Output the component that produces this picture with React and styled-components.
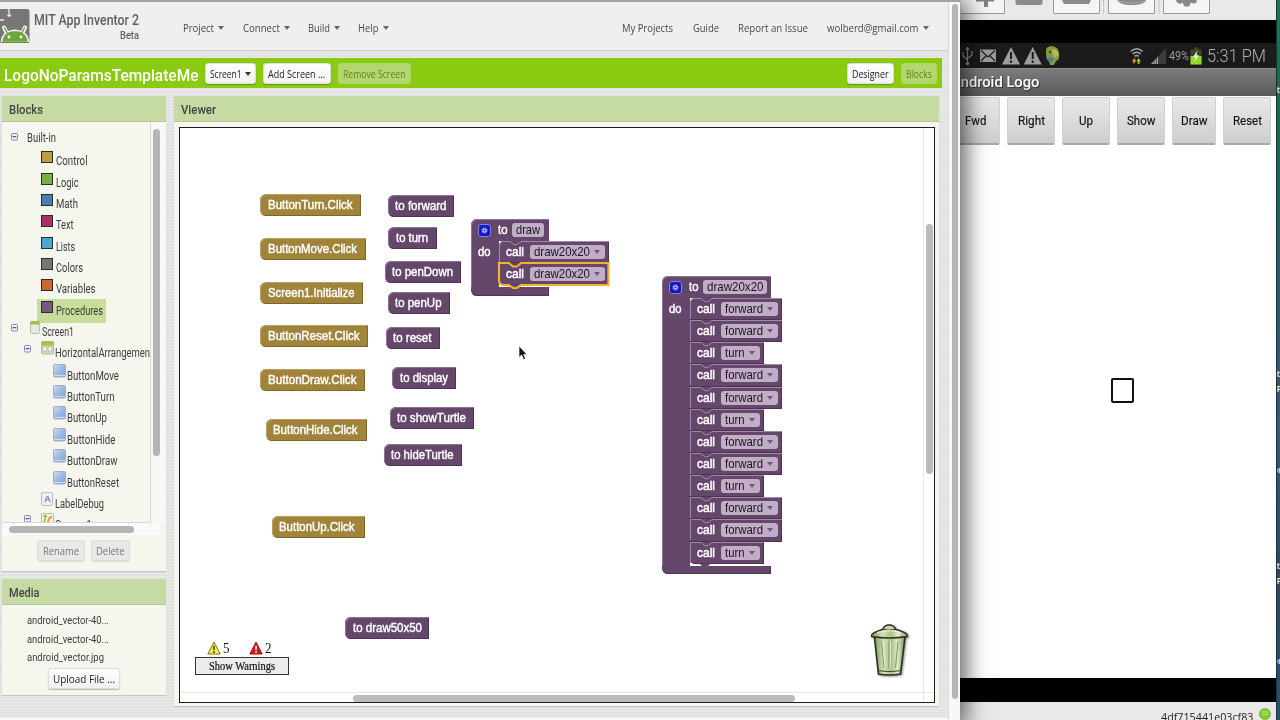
import React, { useLayoutEffect, useRef, useState } from 'react';
import styled, { createGlobalStyle, css } from 'styled-components';

const GlobalStyle = createGlobalStyle`
  * { box-sizing: border-box; }
  body { margin: 0; overflow: hidden; background: #2d4f66; }
  svg { flex: none; }
`;

const ui = '"Open Sans", "Noto Sans", sans-serif';
const roboto = 'Roboto, sans-serif';
const arial = '"Liberation Sans", Arial, sans-serif';

/* ---------- text that is condensed or widened to a given width ---------- */

const FitBox = styled.span`
  display: inline-block;
  flex: none;
  width: ${(p) => p.$w}px;
  white-space: nowrap;
`;
const FitInner = styled.span`
  display: inline-block;
  transform-origin: 0 50%;
`;

function Fit({ w, children }) {
  const ref = useRef(null);
  const [scale, setScale] = useState(1);
  useLayoutEffect(() => {
    const measure = () => {
      if (ref.current && ref.current.offsetWidth) {
        const range = document.createRange();
        range.selectNodeContents(ref.current);
        ref.current.style.transform = 'none';
        const natural = range.getBoundingClientRect().width;
        ref.current.style.transform = `scaleX(${w / natural})`;
        setScale(w / natural);
      }
    };
    measure();
    document.fonts.ready.then(measure);
  }, [w, children]);
  return (
    <FitBox $w={w}>
      <FitInner ref={ref} style={{ transform: `scaleX(${scale})` }}>{children}</FitInner>
    </FitBox>
  );
}

/* ---------- shell ---------- */

const Desktop = styled.div`
  display: flex;
  width: 1280px;
  height: 720px;
  overflow: hidden;
`;
const Browser = styled.div`
  display: flex;
  flex: none;
  width: 960px;
  height: 720px;
  border-top: 2px solid #a2a2a2;
  background: #fafafa;
  position: relative;
  z-index: 2;
  box-shadow: 2px 4px 22px 4px rgba(0, 0, 0, 0.62);
`;
const Page = styled.div`
  flex: none;
  width: 948px;
  height: 716px;
  display: flex;
  flex-direction: column;
  background:
    repeating-linear-gradient(0deg, rgba(255, 255, 255, 0.25) 0 1px, transparent 1px 3px),
    repeating-linear-gradient(90deg, rgba(0, 0, 0, 0.018) 0 1px, transparent 1px 4px),
    #e3e3e3;
`;
const PageScroll = styled.div`
  flex: 1;
  padding: 2px 0 0 2.5px;
  border-left: 1px solid #d8d8d8;
  background: #f8f8f8;
`;
const Thumb = styled.div`
  width: ${(p) => p.$w}px;
  height: ${(p) => p.$h}px;
  border-radius: 4px;
  background: ${(p) => p.$c || '#b5b5b5'};
`;

/* ---------- top bar ---------- */

const TopBar = styled.header`
  display: flex;
  align-items: flex-start;
  height: 49px;
  flex: none;
  background: #efefef;
  border-bottom: 1px solid #cbcbcb;
`;
const Brand = styled.div`
  width: 105px;
  margin-left: 5px;
  padding-top: 10px;
  display: flex;
  flex-direction: column;
  align-items: flex-end;
  font: 500 14px/16px ${roboto};
  color: #5f5f5f;
`;
const Beta = styled.div`
  font: 500 10.5px/14px ${roboto};
  margin-top: 1px;
`;
const Nav = styled.nav`
  display: flex;
  padding-top: 18px;
  margin-left: ${(p) => p.$ml || 0}px;
  gap: ${(p) => p.$gap}px;
  font: 11px/16px ${ui};
  color: #484848;
`;
const NavItem = styled.span`
  display: flex;
  align-items: center;
  gap: 4px;
`;
const Caret = styled.i`
  width: 0;
  height: 0;
  border: 3px solid transparent;
  border-top: 4px solid ${(p) => p.$c || '#666'};
  border-bottom: 0;
`;

const Green = styled.div`
  display: flex;
  align-items: center;
  height: 30px;
  width: 942px;
  flex: none;
  margin-top: 7px;
  padding-left: 4px;
  padding-right: 5px;
  background: #8aca10;
  color: #fff;
`;
const ProjectName = styled.h1`
  margin: 5px 6px 0 0;
  font: 500 16px/20px ${roboto};
`;
const Button = styled.button`
  flex: none;
  display: flex;
  align-items: center;
  justify-content: center;
  gap: 3px;
  width: ${(p) => p.$w}px;
  height: 21px;
  margin: 1px ${(p) => p.$mr || 0}px 0 0;
  padding: 0;
  border: 1px solid #ddd;
  border-radius: 3px;
  background: linear-gradient(#fff, #f1f1f1);
  box-shadow: 0 1px 1px rgba(0, 0, 0, 0.25);
  font: 11px/16px ${ui};
  color: #222;
  ${(p) => p.$on && css`
    background: #b3d76e;
    border-color: #b0d763;
    box-shadow: none;
    color: #5d7f2a;
  `}
  ${(p) => p.$off && css`
    background: #e8e9e6;
    border-color: #dcdddb;
    box-shadow: 0 1px 1px rgba(0, 0, 0, 0.1);
    color: #777;
  `}
`;
const Spacer = styled.div`flex: 1;`;

/* ---------- panels ---------- */

const Columns = styled.main`
  display: flex;
  gap: 8px;
  padding: 8px 0 0 2px;
`;
const Side = styled.div`
  width: 164px;
  display: flex;
  flex-direction: column;
  gap: 8px;
`;
const Panel = styled.section`
  height: ${(p) => p.$h}px;
  width: ${(p) => p.$w}px;
  display: flex;
  flex-direction: column;
  background: #f5f6ee;
  box-shadow: 0 1px 1px rgba(0, 0, 0, 0.12);
`;
const PanelTitle = styled.h2`
  flex: none;
  height: 26px;
  margin: 0;
  padding: 6px 0 0 7px;
  background: #c6daa3;
  border-bottom: 1px solid #b4c596;
  font: 500 12px/17px ${roboto};
  color: #444;
`;
const TreeFrame = styled.div`
  display: flex;
  height: 401px;
  flex: none;
`;
const Tree = styled.div`
  width: 149px;
  overflow: hidden;
  padding-top: 4px;
  border-right: 1px solid #d9dad4;
  border-bottom: 1px solid #d9dad4;
  font: 12px/16px ${roboto};
  color: #3c3c3c;
`;
const Row = styled.div`
  display: flex;
  align-items: flex-start;
  height: ${(p) => p.$h || 21.35}px;
  padding-left: ${(p) => p.$pl}px;
  gap: ${(p) => p.$gap ?? 2}px;
`;
const RowText = styled.span`padding-top: 4px;`;
const Mark = styled.span`
  display: flex;
  width: 69px;
  height: 24px;
  margin: 0 0 -3px -4.5px;
  padding-left: 4.5px;
  gap: 2.3px;
  background: ${(p) => (p.$on ? '#c9dd9b' : 'transparent')};
`;
const Swatch = styled.i`
  flex: none;
  width: 12px;
  height: 12px;
  margin-top: 2px;
  border: 1px solid #2c2c2c;
  background: ${(p) => p.$c};
`;
const TreeScroll = styled.div`
  flex: 1;
  padding: 7px 0 0 2px;
  background: #f8f8f6;
`;
const BottomScroll = styled.div`
  flex: none;
  height: 12px;
  width: 158px;
  padding: 3px 0 0 7px;
  background: #fafafa;
`;
const ButtonRow = styled.div`
  display: flex;
  gap: 6.5px;
  padding: 4px 0 0 35px;
`;
const MediaList = styled.div`
  padding: 6px 0 0 25px;
  font: 11.5px/18.6px ${roboto};
  color: #3c3c3c;
`;
const MediaItem = styled.div`height: 18.6px;`;
const UploadRow = styled.div`padding: 0.5px 0 0 45.5px;`;

/* ---------- blocks workspace ---------- */

const Canvas = styled.div`
  position: relative;
  width: 756px;
  height: 576px;
  margin: 5px 0 0 5px;
  border: 1px solid #1e1e1e;
  background: #fff;
  overflow: hidden;
`;
const at = css`
  position: absolute;
  left: ${(p) => p.$x - 180}px;
  top: ${(p) => p.$y - 128}px;
`;
const bevel = (c) => css`
  box-shadow: inset 1px 1px 0 ${c[1]}, inset -1px -1px 0 ${c[2]};
  background: ${c[0]};
`;
const GOLD = ['#a1843a', '#b8a066', '#7d662a'];
const PURPLE = ['#65476c', '#8b7391', '#4c3352'];

const Solo = styled.div`
  ${at}
  ${(p) => bevel(p.$c)}
  display: flex;
  align-items: center;
  width: ${(p) => p.$w}px;
  height: 22px;
  padding: 0 0 0 7.4px;
  border-radius: 6px 0 0 6px;
  font: 13px/20px ${arial};
  color: #fff;
  -webkit-text-stroke: 0.45px #fff;
`;
const Proc = styled.div`
  ${at}
  width: ${(p) => p.$w}px;
  font: 13px/20px ${arial};
  color: #fff;
`;
const ProcHead = styled.div`
  display: flex;
  align-items: center;
  height: 22px;
  padding-left: 7px;
  border-radius: 6px 0 0 0;
  background: ${PURPLE[0]};
  box-shadow: inset 1px 1px 0 ${PURPLE[1]};
`;
const ProcBody = styled.div`
  display: flex;
  width: max-content;
`;
const Rail = styled.div`
  width: 28px;
  padding: 1px 0 0 7px;
  background: ${PURPLE[0]};
  box-shadow: inset 1px 0 0 ${PURPLE[1]};
`;
const Stack = styled.div`
  display: flex;
  flex-direction: column;
  align-items: flex-start;
  padding-bottom: 2px;
  background: linear-gradient(#fff, #fff) 0 100% / ${(p) => p.$w - 28}px 2px no-repeat;
`;
const ProcFoot = styled.div`
  height: ${(p) => p.$h}px;
  border-radius: 0 0 0 6px;
  background: ${PURPLE[0]};
  box-shadow: inset 0 -1px 0 ${PURPLE[2]}, inset -1px 0 0 ${PURPLE[2]};
`;
const Word = styled.span`
  -webkit-text-stroke: 0.5px #fff;
  margin-left: ${(p) => p.$ml || 0}px;
`;
const Field = styled.span`
  display: flex;
  align-items: center;
  gap: 4px;
  height: 14px;
  width: ${(p) => p.$w}px;
  margin-left: ${(p) => p.$ml || 0}px;
  padding-left: 4px;
  border-radius: 3px;
  background: #c1adc6;
  color: #1c1420;
`;
const CallBox = styled.div`
  position: relative;
  display: flex;
  align-items: center;
  width: ${(p) => p.$w}px;
  height: 22.15px;
  padding-left: 7px;
  background: ${PURPLE[0]};
  box-shadow: inset -1px -1px 0 ${PURPLE[2]};
  border-radius: ${(p) => (p.$first ? '5px' : 0)} 0 0 ${(p) => (p.$last ? '5px' : 0)};
`;
const Edge = styled.svg`
  position: absolute;
  left: 0;
  top: 0;
  overflow: visible;
  pointer-events: none;
  z-index: ${(p) => (p.$z ? 2 : 1)};
`;

function Gear() {
  return (
    <svg width="13" height="13" viewBox="0 0 13 13">
      <rect x="0.5" y="0.5" width="12" height="12" rx="2.5" fill="#1717c4" stroke="#7f86d6" />
      <circle cx="6.5" cy="6.5" r="1.7" fill="#1717c4" stroke="#dfe2ff" strokeWidth="1.2" />
      <circle cx="6.5" cy="6.5" r="2.8" fill="none" stroke="#9aa2ee" strokeWidth="0.8" strokeDasharray="1.1 1.1" />
    </svg>
  );
}

function Call({ name, tw, w, first, last, selected }) {
  return (
    <CallBox $w={w} $first={first} $last={last}>
      <Edge width={w} height="22" $z={selected}>
        {last && <path d="M9 21.5 L13.5 25.3 H16.5 L21 21.5 Z" fill={PURPLE[0]} />}
        {selected ? (
          <path
            d={`M0 0 H10 L14 3.5 H18 L22 0 H${w} V22 H22 L18 25 H14 L10 22 H5 Q0 22 0 17 Z`}
            fill="none" stroke="#f3b228" strokeWidth="2.2"
          />
        ) : (
          <path
            d={`M0.5 21 V${first ? 5 : 0.5} ${first ? 'Q0.5 0.5 5 0.5' : ''} H11 L15 3.7 H18 L22 0.5 H${w}`}
            fill="none" stroke="#a08ba6" strokeWidth="1"
          />
        )}
      </Edge>
      <Word><Fit w={18}>call</Fit></Word>
      <Field $ml={6} $w={tw + 19}>
        <Fit w={tw}>{name}</Fit>
        <Caret $c="#6d5b78" />
      </Field>
    </CallBox>
  );
}

function Procedure({ x, y, w, name, nameW, calls, foot }) {
  return (
    <Proc $x={x} $y={y} $w={w}>
      <ProcHead>
        <Gear />
        <Word $ml={7}><Fit w={9.5}>to</Fit></Word>
        <Field $ml={4} $w={nameW + 8}><Fit w={nameW}>{name}</Fit></Field>
      </ProcHead>
      <ProcBody>
        <Rail><Word><Fit w={12.5}>do</Fit></Word></Rail>
        <Stack $w={w}>
          {calls.map((c, i) => (
            <Call key={i} {...c} first={i === 0} last={i === calls.length - 1} />
          ))}
        </Stack>
      </ProcBody>
      <ProcFoot $h={foot} />
    </Proc>
  );
}

const ViewScrollV = styled.div`
  position: absolute;
  top: 0;
  right: 0;
  width: 11.5px;
  height: 100%;
  padding: 96px 0 0 2.5px;
  border-left: 1px solid #e6e6e6;
`;
const ViewScrollH = styled.div`
  position: absolute;
  left: 0;
  bottom: 0;
  width: 100%;
  height: 10px;
  padding: 1.5px 0 0 172.5px;
  border-top: 1px solid #e6e6e6;
`;
const Warnings = styled.div`
  ${at}
  width: 94px;
  font: 14.5px/16px "Liberation Serif", serif;
  color: #111;
`;
const WarnCounts = styled.div`
  display: flex;
  align-items: center;
  gap: 2px;
  padding-left: 11.5px;
  height: 18px;
`;
const WarnButton = styled.div`
  display: flex;
  justify-content: center;
  align-items: center;
  height: 18px;
  border: 1px solid #333;
  background: #ececec;
  font-size: 12px;
  -webkit-text-stroke: 0.2px #111;
`;
const Float = styled.div`${at} line-height: 0;`;
const Gap = styled.span`
  flex: none;
  width: ${(p) => p.$w}px;
`;

function Warn({ fill, line, mark }) {
  return (
    <svg width="14" height="14" viewBox="0 0 14 14">
      <path d="M7 1 L13.2 13 H0.8 Z" fill={fill} stroke={line} strokeLinejoin="round" />
      <path d="M7 4.7 V9" stroke={mark} strokeWidth="1.5" />
      <circle cx="7" cy="11" r="0.9" fill={mark} />
    </svg>
  );
}

function Trash() {
  return (
    <svg width="42" height="58" viewBox="0 0 42 58">
      <defs>
        <linearGradient id="can" x1="0" x2="1">
          <stop offset="0" stopColor="#7f9a5c" />
          <stop offset="0.3" stopColor="#d3e0b7" />
          <stop offset="0.55" stopColor="#a9c186" />
          <stop offset="0.75" stopColor="#e0ebcb" />
          <stop offset="1" stopColor="#7c9658" />
        </linearGradient>
      </defs>
      <g style={{ filter: 'drop-shadow(1px 1px 1.2px rgba(0,0,0,.45))' }}>
        <path d="M5.5 16 L9.5 53 Q20 55 31.5 53 L36 16 Z" fill="url(#can)" stroke="#2b3420" strokeWidth="1.7" />
        <path d="M2.5 15.5 Q2 12.5 8 10.5 Q14 7.5 20 7.5 Q27 7.5 33 10.5 Q39 12.5 38.5 15.5 Q20 18.5 2.5 15.5 Z" fill="url(#can)" stroke="#2b3420" strokeWidth="1.4" />
        <path d="M14 8 Q15.5 4 20 4 Q25 4 26.5 8" fill="#c8d8aa" stroke="#2b3420" strokeWidth="1.6" />
        <path d="M8 11.5 Q20 8 32 11.5" fill="none" stroke="#edf4dd" strokeWidth="1.1" />
        <path d="M9.5 49.5 Q20 51.5 32 49.5" fill="none" stroke="#3b492b" strokeWidth="1.2" />
        <path d="M12.5 20 L15 47 M20 20 V48 M29 20 L26.5 47" stroke="#7d9560" strokeWidth="1" />
        <path d="M21.3 20 V48 M13.8 20 L16.2 47" stroke="#eef4e0" strokeWidth="0.8" />
      </g>
    </svg>
  );
}

/* ---------- small drawings ---------- */

function Logo() {
  return (
    <svg width="30" height="37" viewBox="0 0 30 37">
      <path d="M0 2 H27 Q29.5 2 29.5 4.5 V33 Q29.5 36 27 36 H0 Z" fill="#777" />
      <path d="M9 1.5 V9 M7.5 8 Q9 10 11 8 M0 13 H4" stroke="#ececec" strokeWidth="1.3" fill="none" />
      <path d="M6.5 25.5 L4 20.5 M22.5 25.5 L25 20.5" stroke="#f4f4f4" strokeWidth="4" strokeLinecap="round" />
      <path d="M1.5 35.5 Q2 24 14.8 23.2 Q28 24 28.3 35.5 Z" fill="#6ea53a" stroke="#f4f4f4" strokeWidth="1.6" />
      <path d="M7.2 26 L4.5 21 M21.8 26 L24.5 21" stroke="#6ea53a" strokeWidth="1.5" strokeLinecap="round" />
      <circle cx="9" cy="30" r="1.4" fill="#fff" /><circle cx="21" cy="30" r="1.4" fill="#fff" />
      <path d="M1 35.5 H29" stroke="#5e8735" />
    </svg>
  );
}
const Toggle = ({ mt = 2 }) => (
  <svg width="7" height="8" viewBox="0 0 7 8" style={{ marginTop: mt }}>
    <rect x="0.5" y="0.5" width="6" height="6.5" rx="1.2" fill="#f4f5fb" stroke="#8286b4" />
    <path d="M1.7 3.7 H5.3" stroke="#33387c" strokeWidth="1.1" />
  </svg>
);
const ScreenIcon = () => (
  <svg width="10" height="15" viewBox="0 0 10 15">
    <rect x="0.5" y="1.5" width="9" height="12" rx="1" fill="#e6eadf" stroke="#b9c0b0" />
    <path d="M0.5 4.5 V2 Q0.5 1 1.5 1 H8.5 Q9.5 1 9.5 2 V4.5 Z" fill="#9fbf4d" />
  </svg>
);
const ArrangeIcon = () => (
  <svg width="13" height="14" viewBox="0 0 13 14">
    <rect x="0.5" y="0.5" width="12" height="12.5" rx="1" fill="#cfdaba" stroke="#b3c08e" />
    <path d="M0.5 4.5 V0.5 H12.5 V4.5 Z" fill="#9cc541" />
    <rect x="2" y="6" width="3.6" height="4" fill="#fff" stroke="#a0b08a" strokeWidth=".6" />
    <rect x="7.2" y="6" width="3.6" height="4" fill="#fff" stroke="#a0b08a" strokeWidth=".6" />
  </svg>
);
const ButtonIcon = () => (
  <svg width="13" height="14" viewBox="0 0 13 14">
    <defs>
      <linearGradient id="bi" x1="0" y1="0" x2="1" y2="1">
        <stop offset="0" stopColor="#d3e0f3" /><stop offset="0.5" stopColor="#9cb9e2" /><stop offset="1" stopColor="#86a7da" />
      </linearGradient>
    </defs>
    <rect x="0.5" y="0.5" width="12" height="12.5" rx="1.5" fill="url(#bi)" stroke="#a3aebf" />
    <path d="M1 11.5 H12" stroke="#cfdcf0" />
  </svg>
);
const LabelBox = styled.span`
  width: 12px;
  height: 14px;
  border: 1px solid #b9bfca;
  border-radius: 2px;
  background: #eef0f5;
  font: 700 9.5px/12px ${arial};
  text-align: center;
  color: #7988b8;
`;
const SensorIcon = () => (
  <svg width="13" height="14" viewBox="0 0 13 14">
    <rect x="0.5" y="0.5" width="12" height="13" rx="1" fill="#f6f5e4" stroke="#b8b8b0" />
    <path d="M2 3 H6 M5 2 L3 10" stroke="#8fbf3a" strokeWidth="1.6" />
    <path d="M7 11 Q7 4 11 4" stroke="#e59a3a" strokeWidth="2" fill="none" />
  </svg>
);

/* ---------- phone window ---------- */

const Phone = styled.div`
  flex: none;
  width: 315.5px;
  height: 720px;
  display: flex;
  flex-direction: column;
  background: #fff;
`;
const Tools = styled.div`
  display: flex;
  height: 20px;
  background: #e9e9e9;
  line-height: 0;
`;
const Black = styled.div`height: ${(p) => p.$h}px; background: #000; flex: none;`;
const Status = styled.div`
  display: flex;
  align-items: center;
  height: 25px;
  flex: none;
  background: #1b1b1b;
  color: #9a9a9a;
  font: 12px/24px ${roboto};
`;
const Title = styled.div`
  height: 28px;
  flex: none;
  border-top: 1px solid #8a8a8a;
  background: linear-gradient(#7c7c7c, #5a5a5a);
  font: 500 14.5px/28px ${roboto};
  color: #fff;
  text-shadow: 1px 1px 1px rgba(0, 0, 0, 0.5);
`;
const TitleText = styled.div`margin-left: -9px;`;
const Keys = styled.div`
  display: flex;
  padding-top: 1px;
  height: 582px;
`;
const Key = styled.div`
  display: flex;
  justify-content: center;
  align-items: center;
  flex: none;
  width: ${(p) => p.$w}px;
  height: 47.5px;
  padding-top: 2px;
  margin: 0 ${(p) => p.$mr}px 0 ${(p) => p.$ml || 0}px;
  border: 1px solid #d0d0d0;
  border-bottom: 2px solid #a9a9a9;
  border-radius: 2px;
  background: linear-gradient(#e8e8e8, #cecece);
  font: 12.5px/20px ${roboto};
  color: #111;
  -webkit-text-stroke: 0.15px #111;
`;
const Turtle = styled.div`
  position: absolute;
  left: 1111px;
  top: 378px;
  width: 23px;
  height: 25px;
  border: 2px solid #111;
  border-radius: 2px;
`;
const Footer = styled.div`
  display: flex;
  justify-content: flex-end;
  gap: 5px;
  height: 18px;
  padding: 6px 5px 0 0;
  overflow: hidden;
  background: #e9e9e9;
  font: 11.5px/18px ${ui};
  color: #222;
`;
const Strip = styled.div`
  flex: 1;
  overflow: hidden;
  border-left: 1px solid #16343a;
  background: linear-gradient(#246e5a 0, #1f6450 16%, #2a5a68 38%, #37587a 60%, #2c4560 82%, #2d4d6c 100%);
  display: flex;
  flex-direction: column;
  padding-top: 82px;
  font: 600 9px/15px ${ui};
  color: #e8eef2;
`;
const Frag = styled.span`height: ${(p) => p.$h}px; flex: none; white-space: nowrap; margin-left: ${(p) => p.$ml || 0}px;`;

function ToolIcons() {
  return (
    <svg width="315" height="20" viewBox="960 0 315 20">
      <g fill="#f5f5f5" stroke="#9a9a9a">
        <path d="M961 -3 H1004.5 V13.5 H961" />
        <path d="M1053.5 -3 H1099.5 V13.5 H1053.5 Z M1108.5 -3 H1154.5 V13.5 H1108.5 Z M1163.5 -3 H1209.5 V13.5 H1163.5 Z" />
      </g>
      <path d="M1103.5 0 V14 M1159 0 V14" stroke="#9a9a9a" strokeDasharray="1 1.5" />
      <path d="M984 0 H988 V7 H984 Z M976 0 H994 V1.5 H976 Z" fill="#808080" />
      <path d="M1015.5 0 H1042.5 V2.5 Q1042.5 5 1040 5 H1018 Q1015.5 5 1015.5 2.5 Z" fill="#8a8a8a" />
      <path d="M1062 0 H1091 L1089 4 H1064 Z" fill="#8a8a8a" />
      <path d="M1117.5 0 H1146 Q1145 5 1132 5 Q1118.5 5 1117.5 0 Z" fill="#8a8a8a" />
      <path d="M1117.5 1 Q1132 5 1146 1" fill="none" stroke="#aaa" />
      <path d="M1176 0 H1197 L1196 3 L1193 3.5 L1191 2.5 L1189 6.5 H1184.5 L1182.5 2.5 L1180 4 L1177 2.5 Z" fill="#888" />
    </svg>
  );
}
function NotifyIcons() {
  return (
    <svg width="105" height="25" viewBox="960 43 105 25">
      <g stroke="#8a8a8a" strokeWidth="1.2" fill="none">
        <path d="M967.5 47 V64 M963 52 V56 L967.5 60 M972 51 V55 L967.5 58.5" />
      </g>
      <circle cx="967.5" cy="63.5" r="1.8" fill="#8a8a8a" />
      <path d="M965.5 50 L967.5 46.5 L969.5 50 Z" fill="#8a8a8a" />
      <rect x="980" y="49.5" width="16" height="12.5" fill="#9b9b9b" />
      <path d="M981 50.5 L988 57 L995 50.5 M981 61 L986 56 M995 61 L990 56" stroke="#1b1b1b" fill="none" strokeWidth="1.2" />
      {[1011, 1032.7].map((x) => (
        <g key={x}>
          <path d={`M${x} 47 L${x + 9} 64.5 H${x - 9} Z`} fill="#9d9d9d" />
          <path d={`M${x} 52 V59`} stroke="#1b1b1b" strokeWidth="2" />
          <circle cx={x} cy="61.8" r="1.2" fill="#1b1b1b" />
        </g>
      ))}
      <path d="M1046 53 Q1045 46 1052 46 Q1059 47 1059 54 Q1060 60 1056 61 L1054 65 H1050 L1049 61 Q1046 60 1046 53 Z" fill="#87993a" />
      <path d="M1052 49 Q1058 49 1059 55 L1054 58 Z" fill="#b0bd57" />
      <circle cx="1050.5" cy="59.5" r="2.6" fill="#4d79a8" />
      <circle cx="1050" cy="52" r="1.2" fill="#3d4b18" />
    </svg>
  );
}
function SignalIcons() {
  return (
    <svg width="38" height="25" viewBox="1130 43 38 25">
      <g fill="none" stroke="#a5a5a5" strokeWidth="1.5">
        <path d="M1130.8 51.5 Q1136.7 46 1142.6 51.5" />
        <path d="M1132.6 54 Q1136.7 50.5 1140.8 54" />
        <path d="M1134.6 56.4 Q1136.7 54.8 1138.8 56.4" />
      </g>
      <path d="M1132 60 H1133.8 V58 H1135 V60 H1136.3 L1134 64 Z" fill="#e58a2a" />
      <path d="M1138.5 58 L1141 61.5 H1139.5 V64 H1137.8 V61.5 H1136.5 Z" fill="#9acb2c" />
      <path d="M1166 48 V64 H1151 Z" fill="#3d3d3d" />
      <path d="M1151 64 L1158 56.8 V64 Z" fill="#a5a5a5" />
      <path d="M1154 60 V64 M1156.5 58 V64" stroke="#1b1b1b" strokeWidth=".6" />
    </svg>
  );
}
function Battery() {
  return (
    <svg width="12" height="18" viewBox="0 0 12 18">
      <path d="M4 0.5 H8 V2.5 H11.5 V17.5 H0.5 V2.5 H4 Z" fill="#3d4629" />
      <path d="M0.5 9 H11.5 V17.5 H0.5 Z" fill="#8fdc22" />
      <path d="M7.5 3.5 L3 10 H5.6 L4.2 15 L9 8.3 H6.4 Z" fill="#f6f6f6" />
    </svg>
  );
}

const Clock = styled.span`
  font-size: 18px;
  font-weight: 300;
  color: #b0b0b0;
`;

/* ---------- data ---------- */

const drawers = [
  ['Control', '#c09c3c', 31.5], ['Logic', '#79ad45', 22.5], ['Math', '#4a7cb4', 22], ['Text', '#ab3163', 17.5],
  ['Lists', '#48a9cf', 19], ['Colors', '#757575', 27], ['Variables', '#cc6633', 39.5], ['Procedures', '#755880', 47],
];
const buttons = [
  ['ButtonMove', 52], ['ButtonTurn', 47.5], ['ButtonUp', 40], ['ButtonHide', 48.5], ['ButtonDraw', 50.5], ['ButtonReset', 52],
];
const solo = [
  ['ButtonTurn.Click', GOLD, 260.4, 194, 101, 84.5], ['ButtonMove.Click', GOLD, 260.4, 238.4, 105.5, 89],
  ['Screen1.Initialize', GOLD, 260.4, 282, 102.5, 86.5], ['ButtonReset.Click', GOLD, 260.4, 325.4, 107.5, 91.5],
  ['ButtonDraw.Click', GOLD, 260.4, 369.4, 105, 88.5], ['ButtonHide.Click', GOLD, 266, 419, 101, 84.5],
  ['ButtonUp.Click', GOLD, 272, 516, 92.5, 75.5],
  ['to forward', PURPLE, 388, 195, 66.4, 51.5], ['to turn', PURPLE, 388.4, 227.4, 48.5, 32],
  ['to penDown', PURPLE, 385, 261, 76.4, 61], ['to penUp', PURPLE, 388, 292.4, 62, 46.5],
  ['to reset', PURPLE, 385.5, 327.4, 54, 38.5], ['to display', PURPLE, 392.4, 367.4, 64, 48],
  ['to showTurtle', PURPLE, 390, 407.4, 84.4, 69], ['to hideTurtle', PURPLE, 384, 444, 78, 62.5],
  ['to draw50x50', PURPLE, 345.4, 617.4, 84, 69],
];
const fwd = { name: 'forward', tw: 38, w: 92 };
const trn = { name: 'turn', tw: 19.5, w: 74 };
const side = [fwd, fwd, trn];
const keys = [
  ['Fwd', 49, 21.5, 7, -9], ['Right', 48, 27, 7], ['Up', 48, 14, 7], ['Show', 48, 28.5, 7], ['Draw', 43.5, 26.5, 7.5], ['Reset', 48, 29, 0],
];

export default function App() {
  return (
    <>
      <GlobalStyle />
      <Desktop>
        <Browser>
          <Page>
            <TopBar>
              <Float as="span" $x={180} $y={133}><Logo /></Float>
              <Gap $w={29.3} />
              <Brand>
                <Fit w={105}>MIT App Inventor 2</Fit>
                <Beta><Fit w={19}>Beta</Fit></Beta>
              </Brand>
              <Nav $ml={44} $gap={18.3}>
                {[['Project', 31], ['Connect', 37], ['Build', 22], ['Help', 20.5]].map(([t, w]) => (
                  <NavItem key={t}><Fit w={w}>{t}</Fit><Caret /></NavItem>
                ))}
              </Nav>
              <Spacer />
              <Nav $gap={19.3}>
                <Fit w={51}>My Projects</Fit>
                <Fit w={26}>Guide</Fit>
                <Fit w={70}>Report an Issue</Fit>
                <NavItem><Fit w={91.5}>wolberd@gmail.com</Fit><Caret /></NavItem>
              </Nav>
              <Gap $w={19.3} />
            </TopBar>
            <Green>
              <ProjectName><Fit w={194.5}>LogoNoParamsTemplateMe</Fit></ProjectName>
              <Button $w={51.5} $mr={7}><Fit w={31.5}>Screen1</Fit><Caret $c="#333" /></Button>
              <Button $w={67.5} $mr={7}><Fit w={57}>Add Screen ...</Fit></Button>
              <Button $w={73} $on><Fit w={62.5}>Remove Screen</Fit></Button>
              <Spacer />
              <Button $w={47.5} $mr={6.5}><Fit w={36.5}>Designer</Fit></Button>
              <Button $w={36.5} $on><Fit w={26}>Blocks</Fit></Button>
            </Green>
            <Columns>
              <Side>
                <Panel $h={475} $w={164}>
                  <PanelTitle><Fit w={34}>Blocks</Fit></PanelTitle>
                  <TreeFrame>
                    <Tree>
                      <Row $pl={9.4} $h={23.2} $gap={8.5}>
                        <Toggle mt={7} /><RowText><Fit w={29}>Built-in</Fit></RowText>
                      </Row>
                      {drawers.map(([t, c, w], i) => (
                        <Row key={t} $pl={39.4}>
                          <Mark $on={i === 7}>
                            <Swatch $c={c} /><RowText><Fit w={w}>{t}</Fit></RowText>
                          </Mark>
                        </Row>
                      ))}
                      <Row $pl={9.4} $gap={0}>
                        <Toggle mt={4} /><Gap $w={12} /><ScreenIcon /><Gap $w={2} /><RowText><Fit w={32}>Screen1</Fit></RowText>
                      </Row>
                      <Row $pl={22} $gap={0} $h={22.5}>
                        <Toggle mt={4} /><Gap $w={10} /><ArrangeIcon /><Gap $w={1} /><RowText><Fit w={95}>HorizontalArrangemen</Fit></RowText>
                      </Row>
                      {buttons.map(([t, w]) => (
                        <Row key={t} $pl={51.4} $gap={1}><ButtonIcon /><RowText><Fit w={w}>{t}</Fit></RowText></Row>
                      ))}
                      <Row $pl={39.4} $gap={1.5}><LabelBox>A</LabelBox><RowText><Fit w={49}>LabelDebug</Fit></RowText></Row>
                      <Row $pl={22} $gap={0}>
                        <Toggle mt={2} /><Gap $w={10} /><SensorIcon /><Gap $w={1} /><RowText><Fit w={37}>Canvas1</Fit></RowText>
                      </Row>
                    </Tree>
                    <TreeScroll><Thumb $w={6.5} $h={327} /></TreeScroll>
                  </TreeFrame>
                  <BottomScroll><Thumb $w={125} $h={6.5} /></BottomScroll>
                  <ButtonRow>
                    <Button $w={47.5} $off><Fit w={36}>Rename</Fit></Button>
                    <Button $w={39} $off><Fit w={28.5}>Delete</Fit></Button>
                  </ButtonRow>
                </Panel>
                <Panel $h={116} $w={164}>
                  <PanelTitle><Fit w={30.5}>Media</Fit></PanelTitle>
                  <MediaList>
                    <MediaItem><Fit w={82}>android_vector-40...</Fit></MediaItem>
                    <MediaItem><Fit w={82}>android_vector-40...</Fit></MediaItem>
                    <MediaItem><Fit w={77}>android_vector.jpg</Fit></MediaItem>
                  </MediaList>
                  <UploadRow><Button $w={72.5}><Fit w={62}>Upload File ...</Fit></Button></UploadRow>
                </Panel>
              </Side>
              <Panel $h={610} $w={765}>
                <PanelTitle><Fit w={35}>Viewer</Fit></PanelTitle>
                <Canvas>
                  {solo.map(([t, c, x, y, w, tw]) => (
                    <Solo key={t} $c={c} $x={x} $y={y} $w={w}><Fit w={tw}>{t}</Fit></Solo>
                  ))}
                  <Procedure
                    x={471} y={219} w={78} name="draw" nameW={24} foot={9}
                    calls={[{ name: 'draw20x20', tw: 56, w: 110 }, { name: 'draw20x20', tw: 56, w: 109.5, selected: true }]}
                  />
                  <Procedure
                    x={662} y={276} w={109} name="draw20x20" nameW={56.5} foot={8.5}
                    calls={[...side, ...side, ...side, ...side]}
                  />
                  <Float $x={518} $y={345}>
                    <svg width="11" height="16" viewBox="0 0 11 16">
                      <path d="M1 1 V12.5 L3.7 10 L5.6 14.6 L7.6 13.8 L5.7 9.5 H9 Z" fill="#111" stroke="#fff" strokeWidth=".7" />
                    </svg>
                  </Float>
                  <Warnings $x={195} $y={639.4}>
                    <WarnCounts>
                      <Warn fill="#f3f03a" line="#77762a" mark="#333" /><Fit w={6.5}>5</Fit>
                      <Gap $w={16} />
                      <Warn fill="#cf1620" line="#b01018" mark="#fff" /><Fit w={6.5}>2</Fit>
                    </WarnCounts>
                    <WarnButton><Fit w={66}>Show Warnings</Fit></WarnButton>
                  </Warnings>
                  <Float $x={869} $y={621}><Trash /></Float>
                  <ViewScrollV><Thumb $w={6.5} $h={250} $c="#bbb" /></ViewScrollV>
                  <ViewScrollH><Thumb $w={442} $h={7} $c="#bbb" /></ViewScrollH>
                </Canvas>
              </Panel>
            </Columns>
          </Page>
          <PageScroll><Thumb $w={6} $h={695} /></PageScroll>
        </Browser>
        <Phone>
          <Tools><ToolIcons /></Tools>
          <Black $h={23} />
          <Status>
            <NotifyIcons />
            <Spacer />
            <SignalIcons />
            <Gap $w={1} />
            <Fit w={20}>49%</Fit>
            <Gap $w={1.5} />
            <Battery />
            <Gap $w={5} />
            <Clock><Fit w={59}>5:31 PM</Fit></Clock>
            <Gap $w={9.5} />
          </Status>
          <Title><TitleText><Fit w={88.5}>Android Logo</Fit></TitleText></Title>
          <Keys>
            {keys.map(([t, w, tw, mr, ml]) => (
              <Key key={t} $w={w} $mr={mr} $ml={ml}><Fit w={tw}>{t}</Fit></Key>
            ))}
          </Keys>
          <Black $h={24} />
          <Footer>
            <Fit w={92.5}>4df715441e03cf83</Fit>
            <svg width="12" height="12" viewBox="0 0 12 12">
              <circle cx="6" cy="6" r="5.6" fill="#84cc2e" stroke="#6a9f2d" strokeWidth=".6" />
              <path d="M3 4 H9 M3 6.5 H9" stroke="#b8e77c" strokeWidth="1" />
            </svg>
          </Footer>
        </Phone>
        <Strip>
          <Frag $h={284}>t</Frag>
          <Frag $h={15}>t</Frag>
          <Frag $h={81}>P</Frag>
          <Frag $h={96} $ml={-4}>or</Frag>
          <Frag $h={15}>t</Frag>
          <Frag $h={80}>P</Frag>
          <Frag $h={20} $ml={-4}>or</Frag>
        </Strip>
        <Turtle />
      </Desktop>
    </>
  );
}
